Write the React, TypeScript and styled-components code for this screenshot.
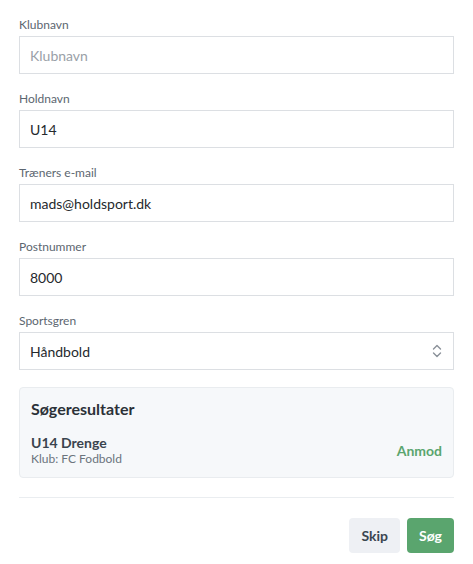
import styled, { createGlobalStyle } from "styled-components"

const GlobalStyle = createGlobalStyle`
  body {
    margin: 0;
    background: #ffffff;
    font-family: Lato, "Liberation Sans", sans-serif;
    color: #2b3036;
  }
`

const borderColor: string = "#dcdfe3"
const green: string = "#5aa56e"

const Page = styled.div`
  padding: 17px 19px 12px 19px;
  width: 435px;
`

const Field = styled.div`
  display: flex;
  flex-direction: column;
  gap: 3px;
  margin-bottom: 17px;
`

const Label = styled.label`
  font-size: 12px;
  line-height: 16px;
  color: #5c6670;
`

const Input = styled.input`
  box-sizing: border-box;
  width: 100%;
  height: 38px;
  padding: 0 10px;
  border: 1px solid ${borderColor};
  border-radius: 0;
  font-family: inherit;
  font-size: 14px;
  color: #25292d;
  outline: none;
  &::placeholder {
    color: #9aa1a8;
  }
`

const SelectBox = styled.div`
  box-sizing: border-box;
  display: flex;
  align-items: center;
  justify-content: space-between;
  height: 38px;
  padding: 0 11px 0 10px;
  border: 1px solid ${borderColor};
  font-size: 14px;
  color: #25292d;
`

const Results = styled.div`
  box-sizing: border-box;
  background: #f6f8fa;
  border: 1px solid #e9ecef;
  border-radius: 4px;
  padding: 10px 11px 11px 11px;
  margin-bottom: 19px;
`

const ResultsTitle = styled.h3`
  margin: 0 0 14px 0;
  font-size: 16px;
  line-height: 22px;
  font-weight: 700;
  color: #2b3137;
`

const ResultRow = styled.div`
  display: flex;
  align-items: center;
  justify-content: space-between;
`

const TeamName = styled.div`
  font-size: 14px;
  line-height: 18px;
  font-weight: 700;
  color: #3a444e;
`

const ClubName = styled.div`
  font-size: 12px;
  line-height: 14px;
  color: #6b747d;
`

const RequestLink = styled.span`
  font-size: 14px;
  font-weight: 700;
  color: ${green};
  cursor: pointer;
`

const Divider = styled.hr`
  margin: 0 0 20px 0;
  border: none;
  border-top: 1px solid #eaedf0;
`

const Actions = styled.div`
  display: flex;
  justify-content: flex-end;
  gap: 7px;
`

const Button = styled.button<{$primary?: boolean}>`
  height: 35px;
  padding: 0 12px;
  border: none;
  border-radius: 4px;
  font-family: inherit;
  font-size: 14px;
  font-weight: 700;
  background: ${props => props.$primary ? green : "#eef0f4"};
  color: ${props => props.$primary ? "#ffffff" : "#3a4651"};
  cursor: pointer;
`

const Chevrons = () => (
  <svg width="10" height="14" viewBox="0 0 10 14" fill="none" stroke="#8a9199" strokeWidth="1.4" strokeLinecap="round" strokeLinejoin="round">
    <path d="M1.5 5 L5 1.5 L8.5 5" />
    <path d="M1.5 9 L5 12.5 L8.5 9" />
  </svg>
)

type FieldProps = {
  label: string,
  value?: string,
  placeholder?: string,
}

const TextField = (props: FieldProps) => (
  <Field>
    <Label>{props.label}</Label>
    <Input defaultValue={props.value} placeholder={props.placeholder} />
  </Field>
)

export default function App() {
  return (
    <>
      <GlobalStyle />
      <Page>
        <TextField label="Klubnavn" placeholder="Klubnavn" />
        <TextField label="Holdnavn" value="U14" />
        <TextField label="Træners e-mail" value="mads@holdsport.dk" />
        <TextField label="Postnummer" value="8000" />
        <Field>
          <Label>Sportsgren</Label>
          <SelectBox>
            <span>Håndbold</span>
            <Chevrons />
          </SelectBox>
        </Field>
        <Results>
          <ResultsTitle>Søgeresultater</ResultsTitle>
          <ResultRow>
            <div>
              <TeamName>U14 Drenge</TeamName>
              <ClubName>Klub: FC Fodbold</ClubName>
            </div>
            <RequestLink>Anmod</RequestLink>
          </ResultRow>
        </Results>
        <Divider />
        <Actions>
          <Button>Skip</Button>
          <Button $primary>Søg</Button>
        </Actions>
      </Page>
    </>
  )
}
